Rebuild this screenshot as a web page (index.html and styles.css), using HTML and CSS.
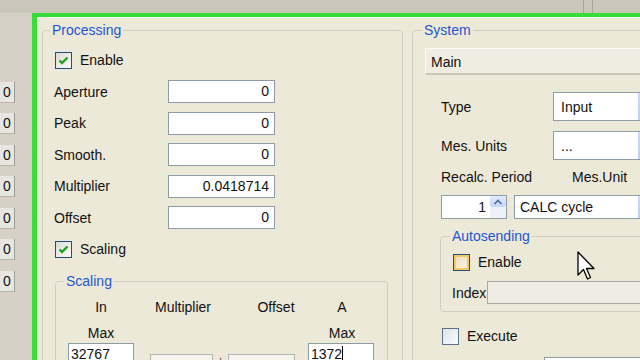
FILE: index.html
```html
<!DOCTYPE html>
<html lang="en">
<head>
    <meta charset="UTF-8">
    <meta name="viewport" content="width=device-width, initial-scale=1.0">
    <title>Channel Settings</title>
    <link rel="stylesheet" href="styles.css">
</head>
<body>
    <div class="top-strip">
        <div class="top-sep"></div>
    </div>
    <div class="main-row">
        <div class="side-strip">
            <div class="side-row"><span class="side-box">0</span></div>
            <div class="side-row"><span class="side-box">0</span></div>
            <div class="side-row"><span class="side-box">0</span></div>
            <div class="side-row"><span class="side-box">0</span></div>
            <div class="side-row"><span class="side-box">0</span></div>
            <div class="side-row"><span class="side-box">0</span></div>
            <div class="side-row"><span class="side-box">0</span></div>
        </div>

        <div class="frame">
            <fieldset class="group processing">
                <legend>Processing</legend>
                <div class="proc-body">
                    <div class="row">
                        <span class="check">
                            <svg width="15" height="15" viewBox="0 0 15 15"><path d="M3.5 7.5 L6 10 L11.5 4.5" fill="none" stroke="#21a121" stroke-width="2.4"/></svg>
                        </span>
                        <span class="check-text">Enable</span>
                    </div>
                    <div class="row"><label class="lbl">Aperture</label><span class="field">0</span></div>
                    <div class="row"><label class="lbl">Peak</label><span class="field">0</span></div>
                    <div class="row"><label class="lbl">Smooth.</label><span class="field">0</span></div>
                    <div class="row"><label class="lbl">Multiplier</label><span class="field">0.0418714</span></div>
                    <div class="row"><label class="lbl">Offset</label><span class="field">0</span></div>
                    <div class="row">
                        <span class="check">
                            <svg width="15" height="15" viewBox="0 0 15 15"><path d="M3.5 7.5 L6 10 L11.5 4.5" fill="none" stroke="#21a121" stroke-width="2.4"/></svg>
                        </span>
                        <span class="check-text">Scaling</span>
                    </div>

                    <fieldset class="group scaling">
                        <legend>Scaling</legend>
                        <div class="scale-head">
                            <span class="c-in">In</span>
                            <span class="c-mult">Multiplier</span>
                            <span class="c-off">Offset</span>
                            <span class="c-a">A</span>
                        </div>
                        <div class="scale-max">
                            <span class="c-in">Max</span>
                            <span class="c-mult"></span>
                            <span class="c-off"></span>
                            <span class="c-a">Max</span>
                        </div>
                        <div class="scale-boxes">
                            <span class="sbox box-in">32767</span>
                            <span class="sbox box-mult">0.041871</span>
                            <span class="op">+</span>
                            <span class="sbox box-off">0</span>
                            <span class="sbox box-a">1372<span class="caret"></span></span>
                        </div>
                    </fieldset>
                </div>
            </fieldset>

            <fieldset class="group system">
                <legend>System</legend>
                <div class="sys-body">
                    <div class="tab-bar">Main</div>

                    <div class="sys-row first">
                        <label class="sys-lbl">Type</label>
                        <div class="combo"><span class="combo-text">Input</span><span class="combo-btn"></span></div>
                    </div>
                    <div class="sys-row">
                        <label class="sys-lbl">Mes. Units</label>
                        <div class="combo"><span class="combo-text">...</span><span class="combo-btn"></span></div>
                    </div>
                    <div class="recalc-head">
                        <span class="recalc-lbl">Recalc. Period</span>
                        <span>Mes.Unit</span>
                    </div>
                    <div class="recalc-row">
                        <div class="spin">
                            <span class="spin-val">1</span>
                            <span class="spin-btns">
                                <span class="spin-up"><svg width="10" height="6" viewBox="0 0 10 6"><path d="M1.5 5 L5 1.5 L8.5 5" fill="none" stroke="#4d6a9c" stroke-width="1.6"/></svg></span>
                                <span class="spin-down"></span>
                            </span>
                        </div>
                        <div class="combo wide"><span class="combo-text">CALC cycle</span><span class="combo-btn"></span></div>
                    </div>

                    <fieldset class="group autosend">
                        <legend>Autosending</legend>
                        <div class="auto-body">
                            <div class="auto-row">
                                <span class="check hot"></span>
                                <span class="check-text">Enable</span>
                            </div>
                            <div class="index-row">
                                <label class="index-lbl">Index</label>
                                <span class="field-off"></span>
                            </div>
                        </div>
                    </fieldset>

                    <div class="exec-row">
                        <span class="check plain"></span>
                        <span class="check-text">Execute</span>
                    </div>
                    <div class="bottom-box"></div>
                </div>
            </fieldset>
        </div>
    </div>

    <svg class="cursor" width="20" height="30" viewBox="0 0 20 30">
        <path d="M1 1 L1 24 L6.5 18.5 L10.5 28 L13.5 26.5 L9.5 17.5 L17 17.5 Z" fill="#fff" stroke="#000" stroke-width="1.3" stroke-linejoin="round"/>
    </svg>
</body>
</html>
```

FILE: styles.css
```css
body {
    margin: 0;
    width: 640px;
    height: 360px;
    overflow: hidden;
    position: relative;
    background-color: #cdc9bd;
    font-family: "Liberation Sans", Arial, sans-serif;
    font-size: 14px;
    color: #111;
}

.top-strip {
    height: 13px;
    background-color: #cac6b9;
}

.top-sep {
    margin-left: 583px;
    width: 8px;
    height: 13px;
    border-left: 1px solid #a9a598;
    border-right: 1px solid #a9a598;
}

.main-row {
    display: flex;
    height: 347px;
}

/* partly visible column of the window behind */
.side-strip {
    width: 32px;
    flex-shrink: 0;
    padding-top: 63.25px;
    background-color: #d5d1c4;
}

.side-row {
    height: 31.5px;
    display: flex;
    align-items: center;
}

.side-box {
    width: 15px;
    height: 21px;
    box-sizing: border-box;
    padding-left: 3px;
    line-height: 20px;
    background-color: #e7e6e1;
    border-right: 1px solid #9b9a94;
    border-bottom: 1px solid #b5b3aa;
}

.frame {
    flex-shrink: 0;
    width: 700px;
    height: 420px;
    box-sizing: border-box;
    border: 4px solid #38de38;
    border-left-width: 5px;
    background-color: #ece9d8;
    box-shadow: inset 1px 1px 0 #f7f6ef;
    display: flex;
    align-items: flex-start;
    padding: 5px 0 0 5px;
}

/* group boxes */
.group {
    margin: 0;
    padding: 0;
    min-width: 0;
    box-sizing: border-box;
    border: 1px solid #d0cfbf;
    border-radius: 4px;
}

.group legend {
    padding: 0 2px;
    line-height: 16px;
    color: #1f55d0;
}

.processing {
    width: 361px;
    height: 400px;
}

.processing legend {
    margin-left: 7px;
}

.proc-body {
    padding: 6.5px 0 0 11px;
}

.row {
    height: 31.5px;
    display: flex;
    align-items: center;
}

.lbl {
    width: 114px;
}

.field {
    width: 107px;
    height: 23px;
    box-sizing: border-box;
    border: 1px solid #8d9ba7;
    background-color: #fff;
    text-align: right;
    padding-right: 5px;
    line-height: 21px;
}

.check {
    width: 17px;
    height: 17px;
    box-sizing: border-box;
    margin-left: 1px;
    border: 1px solid #1f4f7c;
    background: linear-gradient(135deg, #dcdbd3, #fbfbf8);
    display: flex;
    align-items: center;
    justify-content: center;
}

.check.hot {
    box-shadow: inset 0 0 0 2px #f7c765;
    background: linear-gradient(135deg, #e9dcc0, #fdf6e4);
}

.check.plain {
    border-color: #5d7288;
    background: linear-gradient(135deg, #dde3ea, #fafbfc);
}

.check-text {
    margin-left: 8px;
}

/* scaling group */
.scaling {
    margin: 8px 0 0 1px;
    width: 333px;
    height: 120px;
}

.scaling legend {
    margin-left: 8px;
}

.scale-head,
.scale-max {
    display: flex;
    height: 16px;
    line-height: 16px;
    padding-left: 4px;
    text-align: center;
}

.scale-head {
    margin-top: 10px;
}

.scale-max {
    margin-top: 10px;
}

.c-in,
.c-mult {
    width: 82px;
}

.c-off {
    width: 104px;
}

.c-a {
    width: 28px;
}

.scale-boxes {
    display: flex;
    align-items: flex-start;
    margin-top: 2px;
}

.sbox {
    height: 22px;
    box-sizing: border-box;
    border: 1px solid #8d9ba7;
    background-color: #fff;
    padding-left: 2px;
    line-height: 20px;
    display: flex;
    align-items: center;
    overflow: hidden;
    white-space: nowrap;
}

.box-in {
    margin-left: 12px;
    width: 66px;
}

.box-mult,
.box-off {
    margin-top: 11px;
    color: #8a8a84;
    border-color: #b3b5b0;
    background-color: #f4f3ee;
}

.box-mult {
    margin-left: 16px;
    width: 63px;
}

.box-off {
    width: 67px;
}

.op {
    width: 15px;
    margin-top: 10px;
    text-align: center;
    color: #555;
}

.box-a {
    margin-left: 13px;
    width: 66px;
}

.caret {
    display: inline-block;
    width: 1px;
    height: 16px;
    background-color: #000;
}

/* system group */
.system {
    margin-left: 9px;
    width: 260px;
    height: 400px;
}

.system legend {
    margin-left: 9px;
}

.sys-body {
    padding-top: 10px;
}

.tab-bar {
    margin-left: 12px;
    height: 27px;
    box-sizing: border-box;
    padding-left: 5px;
    line-height: 26px;
    background-color: #efede1;
    border-top: 1px solid #fbfaf5;
    border-left: 1px solid #fbfaf5;
    border-bottom: 2px solid #cbc7b6;
}

.sys-row {
    display: flex;
    align-items: center;
    margin: 10px 0 0 28px;
    height: 29px;
}

.sys-row.first {
    margin-top: 17px;
}

.sys-lbl {
    width: 112px;
}

.combo {
    width: 105px;
    height: 29px;
    box-sizing: border-box;
    border: 1px solid #8d9ba7;
    background-color: #fff;
    display: flex;
}

.combo.wide {
    width: 144px;
    height: 24px;
    margin-left: 7px;
}

.combo-text {
    flex: 1;
    padding-left: 7px;
    display: flex;
    align-items: center;
}

.combo.wide .combo-text {
    padding-left: 5px;
}

.combo-btn {
    width: 18px;
    background: linear-gradient(#d4e0fb, #b3c8f5);
    border-left: 1px solid #c3d3fb;
}

.recalc-head {
    display: flex;
    margin: 9px 0 0 28px;
    height: 16px;
    line-height: 16px;
}

.recalc-lbl {
    width: 131px;
}

.recalc-row {
    display: flex;
    margin: 10px 0 0 28px;
    height: 24px;
}

.spin {
    width: 66px;
    height: 24px;
    box-sizing: border-box;
    border: 1px solid #8d9ba7;
    background-color: #fff;
    display: flex;
}

.spin-val {
    flex: 1;
    text-align: right;
    padding-right: 4px;
    line-height: 22px;
}

.spin-btns {
    width: 16px;
    display: flex;
    flex-direction: column;
}

.spin-up {
    height: 11px;
    background: linear-gradient(#e3ebfd, #c5d5f7);
    border-radius: 2px;
    display: flex;
    align-items: center;
    justify-content: center;
}

.spin-down {
    flex: 1;
    background-color: #eef1f8;
}

/* autosending group */
.autosend {
    margin: 9px 0 0 27px;
    width: 240px;
}

.autosend legend {
    margin-left: 9px;
}

.auto-body {
    padding: 6px 0 7px 0;
}

.auto-row {
    display: flex;
    align-items: center;
    height: 24px;
    padding-left: 11px;
}

.index-row {
    display: flex;
    align-items: center;
    margin-top: 7px;
    height: 23px;
}

.index-lbl {
    width: 37px;
    margin-left: 11px;
}

.field-off {
    width: 200px;
    height: 23px;
    box-sizing: border-box;
    border: 1px solid #a9a8a0;
    background-color: #efede3;
}

.exec-row {
    display: flex;
    align-items: center;
    height: 24px;
    margin: 12px 0 0 28px;
}

.bottom-box {
    margin: 9px 0 0 131px;
    width: 150px;
    height: 22px;
    border: 1px solid #8d9ba7;
    background-color: #fff;
}

.cursor {
    position: absolute;
    left: 577px;
    top: 251px;
}
```
